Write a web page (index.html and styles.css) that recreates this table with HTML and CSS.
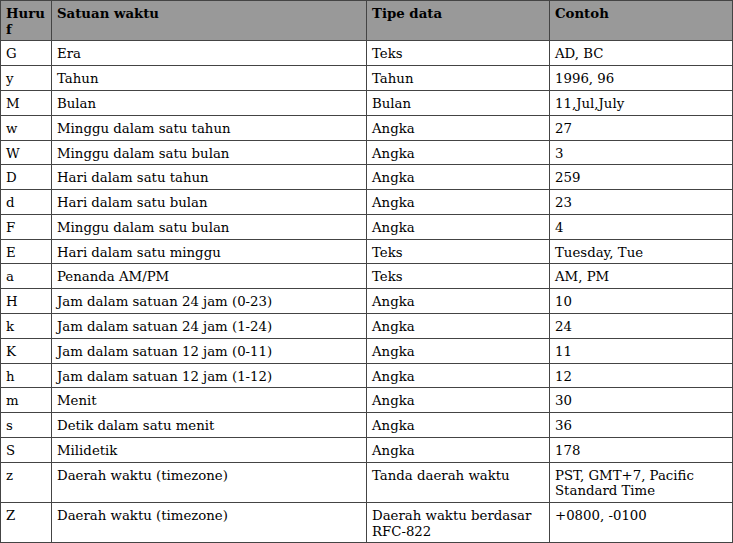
FILE: index.html
```html
<!DOCTYPE html>
<html>
<head>
<meta charset="utf-8">
<link rel="stylesheet" href="styles.css">
</head>
<body>
<table class="fmt">
<colgroup>
<col class="c1"><col class="c2"><col class="c3"><col class="c4">
</colgroup>
<thead>
<tr><th>Huru f</th><th>Satuan waktu</th><th>Tipe data</th><th>Contoh</th></tr>
</thead>
<tbody>
<tr><td>G</td><td>Era</td><td>Teks</td><td>AD, BC</td></tr>
<tr><td>y</td><td>Tahun</td><td>Tahun</td><td>1996, 96</td></tr>
<tr><td>M</td><td>Bulan</td><td>Bulan</td><td>11,Jul,July</td></tr>
<tr><td>w</td><td>Minggu dalam satu tahun</td><td>Angka</td><td>27</td></tr>
<tr><td>W</td><td>Minggu dalam satu bulan</td><td>Angka</td><td>3</td></tr>
<tr><td>D</td><td>Hari dalam satu tahun</td><td>Angka</td><td>259</td></tr>
<tr><td>d</td><td>Hari dalam satu bulan</td><td>Angka</td><td>23</td></tr>
<tr><td>F</td><td>Minggu dalam satu bulan</td><td>Angka</td><td>4</td></tr>
<tr><td>E</td><td>Hari dalam satu minggu</td><td>Teks</td><td>Tuesday, Tue</td></tr>
<tr><td>a</td><td>Penanda AM/PM</td><td>Teks</td><td>AM, PM</td></tr>
<tr><td>H</td><td>Jam dalam satuan 24 jam (0-23)</td><td>Angka</td><td>10</td></tr>
<tr><td>k</td><td>Jam dalam satuan 24 jam (1-24)</td><td>Angka</td><td>24</td></tr>
<tr><td>K</td><td>Jam dalam satuan 12 jam (0-11)</td><td>Angka</td><td>11</td></tr>
<tr><td>h</td><td>Jam dalam satuan 12 jam (1-12)</td><td>Angka</td><td>12</td></tr>
<tr><td>m</td><td>Menit</td><td>Angka</td><td>30</td></tr>
<tr><td>s</td><td>Detik dalam satu menit</td><td>Angka</td><td>36</td></tr>
<tr><td>S</td><td>Milidetik</td><td>Angka</td><td>178</td></tr>
<tr><td>z</td><td>Daerah waktu (timezone)</td><td>Tanda daerah waktu</td><td>PST, GMT+7, Pacific Standard Time</td></tr>
<tr><td>Z</td><td>Daerah waktu (timezone)</td><td>Daerah waktu berdasar RFC-822</td><td>+0800, -0100</td></tr>
</tbody>
</table>
</body>
</html>
```
FILE: styles.css
```css
html, body {
  margin: 0;
  padding: 0;
  background: #fff;
}
.fmt {
  border-collapse: collapse;
  width: 732px;
  table-layout: fixed;
  font-family: "DejaVu Serif", serif;
  font-size: 13.3px;
  line-height: 15.6px;
  color: #000;
}
.c1 { width: 51px; }
.c2 { width: 315px; }
.c3 { width: 183px; }
.c4 { width: 183px; }
.fmt th, .fmt td {
  border: 1px solid #444;
  padding: 5px 5px 3.2px 5px;
  text-align: left;
  vertical-align: top;
}
.fmt th {
  background: #999;
  font-weight: bold;
}
.fmt th:first-child {
  word-break: break-all;
}
```
